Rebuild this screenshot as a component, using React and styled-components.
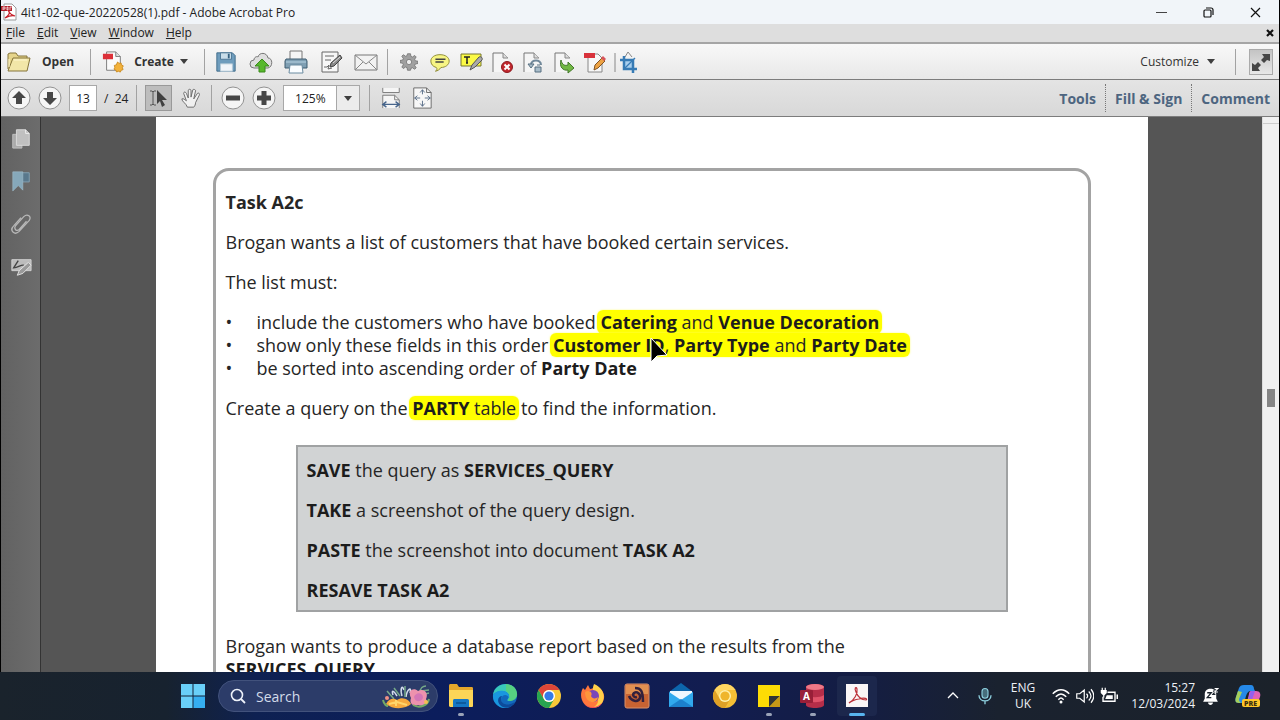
import React from 'react';
import styled, { createGlobalStyle, css } from 'styled-components';


const GlobalStyle = createGlobalStyle`
  * {
    box-sizing: border-box;
  }

  body {
    margin: 0;
    background: #000;
    font-family: "Open Sans", "Noto Sans", sans-serif;
    font-size: 12px;
    color: #222;
  }

  button, input {
    font: inherit;
    color: inherit;
  }

  button {
    border: none;
    background: none;
    padding: 0;
  }

  svg {
    display: block;
    flex: none;
  }
`;


const Desktop = styled.div`
  display: flex;
  flex-direction: column;
  height: 100vh;
  overflow: hidden;
`;


const AppWindow = styled.div`
  display: flex;
  flex-direction: column;
  flex: 1;
  min-height: 0;
  margin: 0 1px;
`;


const TitleBar = styled.header`
  display: flex;
  align-items: center;
  height: 24px;
  flex: none;
  background: #f1f5f9;
`;

const Title = styled.h1`
  flex: 1;
  margin: 0 0 0 4px;
  font-size: 12px;
  font-weight: 400;
`;

const WindowButton = styled.button`
  display: flex;
  align-items: center;
  justify-content: center;
  width: 47px;
  height: 24px;
`;


const MenuBar = styled.nav`
  display: flex;
  align-items: center;
  gap: 12px;
  height: 20px;
  flex: none;
  padding: 0 4px 0 5px;
  background: #dedede;
  border-bottom: 2px solid #a5a5a5;
`;

const MenuItem = styled.button`
  line-height: 18px;
`;

const CloseDocument = styled.button`
  margin-left: auto;
`;


const Toolbar = styled.div`
  display: flex;
  align-items: center;
  height: ${({ $low }) => $low ? '37px' : '36px'};
  flex: none;
  border-bottom: 1px solid #7c7c7c;
  background: ${({ $low }) => $low
    ? 'linear-gradient(#e4e4e4, #d8d8d8)'
    : 'linear-gradient(#f8f8f8, #e8e8e8)'};
`;

const ToolGroup = styled.div`
  display: flex;
  align-items: center;
  gap: ${({ $gap }) => $gap || 0}px;
  padding: 0 ${({ $pad }) => $pad || 0}px;
`;

const Divider = styled.span`
  width: 1px;
  height: 26px;
  background: #a2a2a2;
`;

const DottedDivider = styled.span`
  height: 28px;
  border-left: 1px dotted #777;
`;

const IconButton = styled.button`
  display: flex;
  align-items: center;
  justify-content: center;
  width: 24px;
  height: 26px;
`;

const TextButton = styled.button`
  display: flex;
  align-items: center;
  gap: 6px;
  height: 26px;
  color: #333;
  font-weight: ${({ $bold }) => $bold ? 700 : 400};

  svg:first-child {
    margin-right: 4px;
  }
`;

const CustomizeButton = styled(TextButton)`
  gap: 8px;
  padding: 0 7px;

  svg:first-child {
    margin-right: 0;
  }
`;

const CursorTool = styled(IconButton)`
  width: 27px;
  border: 1px solid #999;
  background: #bdbdbd;
`;

const FullScreenButton = styled(IconButton)`
  border: 1px solid #aaa;
  background: linear-gradient(#c4c4c4, #e8e8e8);
`;

const NumberField = styled.input`
  width: ${({ $wide }) => $wide ? '54px' : '28px'};
  height: 26px;
  padding: 0;
  border: 1px solid #a8a8a8;
  background: #fff;
  text-align: center;
`;

const ZoomDrop = styled.button`
  display: flex;
  align-items: center;
  justify-content: center;
  width: 23px;
  height: 26px;
  border: 1px solid #a8a8a8;
  border-left: none;
  background: #ececec;
`;

const PageTotal = styled.span`
  margin: 0 8px 0 1px;
`;

const PanelLink = styled.button`
  padding: 0 9px;
  color: #4d6580;
  font-size: 14px;
  font-weight: 700;
`;

const Right = styled.div`
  display: flex;
  align-items: center;
  gap: ${({ $gap }) => $gap || 0}px;
  margin-left: auto;
  padding-right: ${({ $gap }) => $gap ? '6px' : 0};
`;


const Workspace = styled.main`
  display: flex;
  flex: 1;
  min-height: 0;
  background: #555;
`;

const SidePanel = styled.aside`
  display: flex;
  flex-direction: column;
  align-items: center;
  gap: 17px;
  width: 40px;
  flex: none;
  padding-top: 8px;
  background: linear-gradient(90deg, #626262, #6c6c6c);
  border-right: 1px solid #333;
`;

const Viewer = styled.section`
  display: flex;
  justify-content: center;
  flex: 1;
  min-width: 0;
  overflow: hidden;
`;

const Paper = styled.article`
  position: relative;
  width: 100%;
  max-width: 992px;
  height: max-content;
  padding: 51px 57px;
  background: #fff;
`;

const TaskCard = styled.div`
  padding: 20px 10px 60px;
  border: 3px solid #a3a3a3;
  border-radius: 16px;
  color: #262626;
  font-family: "Open Sans", "Noto Sans", sans-serif;
  font-size: 18px;
  line-height: 23px;

  strong {
    font-weight: 700;
    color: #1c1c1c;
  }
`;

const TaskTitle = styled.h2`
  margin: 0 0 17px;
  font-size: 18px;
  font-weight: 700;
`;

const Paragraph = styled.p`
  margin: 0 0 17px;
`;

const Requirements = styled.ul`
  list-style: none;
  margin: 0 0 17px;
  padding: 0;
`;

const Requirement = styled.li`
  display: flex;

  &::before {
    content: '•';
    width: 31px;
    flex: none;
  }
`;

const Highlight = styled.mark`
  margin: 0 -3px;
  padding: 0 3px;
  border-radius: 6px;
  color: inherit;
  background: #ff0;
  box-shadow: 0 0 2px #ffff70;
`;

const Instructions = styled.div`
  margin: 25px 70px 23px;
  padding: 12px 9px 8px;
  border: 2px solid #a0a2a3;
  background: #d1d3d4;

  ${Paragraph}:last-child {
    margin-bottom: 0;
  }
`;

const Pointer = styled.svg`
  position: absolute;
  left: 494px;
  top: 220px;
`;

const ScrollTrack = styled.div`
  display: grid;
  grid-template-rows: 7px 266fr 18px 265fr;
  justify-items: center;
  width: 17px;
  flex: none;
  border-left: 1px solid #ddd;
  background: #f0f0f0;
`;

const ScrollCap = styled.span`
  width: 100%;
  border-bottom: 1px solid #ccc;
`;

const ScrollThumb = styled.span`
  grid-row: 3;
  width: 8px;
  background: #858585;
`;


const Taskbar = styled.footer`
  display: flex;
  align-items: center;
  height: 48px;
  flex: none;
  padding: 0 3px 0 176px;
  color: #eef2f7;
  background: linear-gradient(90deg, #1a232c 0%, #17222f 13%, #0e2152 20%, #0b1d5c 34%, #121d50 55%, #141d43 67%, #1a222f 78%, #1b222a 100%);
`;

const StartButton = styled.button`
  display: flex;
  align-items: center;
  justify-content: center;
  width: 34px;
  height: 40px;
`;

const SearchBox = styled.label`
  display: flex;
  align-items: center;
  width: 220px;
  height: 32px;
  margin-left: 8px;
  padding: 0 5px 0 11px;
  border: 1px solid #42527c;
  border-radius: 16px;
  background: #2c3c69;
`;

const SearchInput = styled.input`
  flex: 1;
  min-width: 0;
  padding: 0 0 0 10px;
  border: none;
  outline: none;
  background: none;
  font-size: 14px;

  &::placeholder {
    color: #d3dbea;
    opacity: 1;
  }
`;

const TaskButton = styled.button`
  display: flex;
  flex-direction: column;
  align-items: center;
  justify-content: flex-end;
  gap: 4px;
  width: 40px;
  height: 40px;
  border-radius: 4px;

  ${({ $active }) => $active && css`
    background: #1c274c;
  `}

  &::after {
    content: '';
    width: ${({ $active }) => $active ? '16px' : '6px'};
    height: 3px;
    border-radius: 2px;
    background: ${({ $active, $open }) => $active ? '#58b4ee' : $open ? '#9aa3b8' : 'transparent'};
  }
`;

const TaskButtons = styled.div`
  display: flex;
  gap: 4px;
  margin-left: 3px;
`;

const Tray = styled.div`
  display: flex;
  align-items: center;
  margin-left: auto;
`;

const TrayButton = styled.button`
  display: flex;
  align-items: center;
  justify-content: center;
  gap: 6px;
  height: 40px;
  padding: 0 ${({ $pad }) => $pad}px;
  line-height: 16px;
  white-space: pre-line;
  text-align: ${({ $end }) => $end ? 'right' : 'center'};
`;


const Svg = ({ size = 24, w = size, h = size, box = '0 0 24 24', children }) => (
  <svg width={w} height={h} viewBox={box} fill="none" aria-hidden="true">{children}</svg>
);

const Caret = ({ size = 8 }) => (
  <Svg w={size} h={5} box="0 0 8 5"><path d="M0 0h8L4 5z" fill="#3f3f3f" /></Svg>
);

const PdfIcon = () => (
  <Svg w={16} h={18} box="0 0 16 18">
    <path d="M3 1h8l4 4v12H3z" fill="#fff" stroke="#999" />
    <path d="M0 3h11v5H0z" fill="#b3202a" />
    <path d="M2 4v3M2 4h2v2H2M6 4v3h1V4zM9 7V4h2" stroke="#fff" strokeWidth=".7" />
    <path d="M4 15c3-2 5-5 4-7s-1 3 6 5c-3-1-6 0-10 2z" stroke="#c5202a" strokeWidth="1.2" />
  </Svg>
);

const FolderIcon = () => (
  <Svg w={26} h={22} box="0 0 26 22">
    <path d="M2 18V3l2-1h6l2 3h9v4" fill="#e6d58b" stroke="#85743a" />
    <path d="M7 7h17l-3 13H2z" fill="#f2e6a8" stroke="#85743a" strokeLinejoin="round" />
    <path d="M3 8v8M8 9h13" stroke="#fff8cf" />
  </Svg>
);

const CreateIcon = () => (
  <Svg size={22}>
    <path d="M5 1h10l5 5v15H5z" fill="#fafafa" stroke="#777" />
    <path d="M15 1v5h5" fill="#ddd" stroke="#777" />
    <path d="M1 3h11v6H1z" fill="#dc3038" />
    <path d="m17 12 1.600 1.500 2.200-.5.4 2.200 2 1-1 2 .8 2.100-2.100.7-.9 2-2-.9-2.100.8-.8-2.100-2-1 .9-2-.6-2.100 2.200-.5z" fill="#f3b23b" stroke="#c98a20" />
  </Svg>
);

const SaveIcon = () => (
  <Svg size={22}>
    <path d="M2 2h17l3 3v17H2z" fill="#6f9dbd" stroke="#3e6a89" />
    <path d="M6 2h12v7H6z" fill="#c9dde9" stroke="#4a7594" />
    <path d="M14 3h2v5h-2z" fill="#335f7e" />
    <path d="M6 14h13v8H6z" fill="#f2f6fa" stroke="#b7cbd8" />
  </Svg>
);

const CloudIcon = () => (
  <Svg size={24}>
    <path d="M5 18a4 4 0 0 1 0-8c0-3 3-4 4-3 1-5 9-5 10 1 5 0 5 9 0 10z" fill="#dedede" stroke="#777" />
    <path d="m13 9 7 7h-4v6h-6v-6H6z" fill="#57b82c" stroke="#3b8a1d" />
  </Svg>
);

const PrintIcon = () => (
  <Svg size={24}>
    <path d="M6 1h12v9H6z" fill="#f5f5f5" stroke="#777" />
    <path d="M2 9h20l1 2v7H1v-7z" fill="#7f9fb3" stroke="#3e5c70" />
    <path d="M2 12h20" stroke="#b9d4e4" />
    <path d="M6 15h12l1 8H5z" fill="#fafdff" stroke="#6b8ba0" />
  </Svg>
);

const EditIcon = () => (
  <Svg size={24}>
    <path d="M3 2h16v20H3z" fill="#f7f7f7" stroke="#666" />
    <path d="M6 6h9M6 10h6M5 17h3l2-2-1 4 4-1" stroke="#666" />
    <path d="m11 17 1-4 9-8 2 3-8 8z" fill="#888" stroke="#444" />
    <path d="m14 13 7-6" stroke="#ddd" />
  </Svg>
);

const MailIcon = () => (
  <Svg size={24}>
    <path d="M1 5h22v15H1z" fill="#f2f2f2" stroke="#777" />
    <path d="m1 5 11 9L23 5M1 20l8-8M23 20l-8-8" stroke="#888" />
  </Svg>
);

const GearIcon = () => (
  <Svg size={18}>
    <path d="M10 1h4l.6 3.500 2 .8 3-2 2 2-2 3 .8 2 3.600.7v3l-3.600.7-.8 2 2 3-2 2-3-2-2 .8L14 23h-4l-.6-3.500-2-.8-3 2-2-2 2-3-.8-2L0 13v-3l3.600-.7.8-2-2-3 2-2 3 2 2-.8z" fill="#a0a0a0" stroke="#6c6c6c" />
    <circle cx="12" cy="12" r="3.500" fill="#eee" stroke="#6c6c6c" />
  </Svg>
);

const CommentIcon = () => (
  <Svg size={22}>
    <path d="M12 4c6 0 10 3 10 7s-4 7-9 7c-1 2-4 4-6 4 2-1 2-3 1-4-4-1-6-4-6-7 0-4 4-7 10-7z" fill="#f7f584" stroke="#89852a" />
    <path d="M7 9h11M7 12h9" stroke="#444" strokeWidth="1.500" />
  </Svg>
);

const HighlightIcon = () => (
  <Svg size={24}>
    <path d="M2 4h20v12H2z" fill="#fbfa45" stroke="#777732" />
    <path d="M5 7h6M8 7v6M7 13h2" stroke="#222" strokeWidth="1.500" />
    <path d="m11 20 2-5 7-8c2-1 4 1 3 3l-7 7z" fill="#aaa" stroke="#555" />
  </Svg>
);

const Sheet = () => (
  <>
    <path d="M3 3h11l4 4v15H3z" fill="#f5f5f5" />
    <path d="M3 22V3h10l5 5" stroke="#777" />
    <path d="M13 3v5h5" fill="#ddd" stroke="#888" />
  </>
);

const DeletePageIcon = () => (
  <Svg size={24}>
    <Sheet />
    <circle cx="17" cy="17" r="5.500" fill="#c1272d" stroke="#8d1b20" />
    <path d="m14.500 14.500 5 5m0-5-5 5" stroke="#fff" strokeWidth="2" />
  </Svg>
);

const RotateIcon = () => (
  <Svg size={24}>
    <Sheet />
    <path d="M10 15c0-6 10-6 10 0" stroke="#71889a" strokeWidth="2" />
    <path d="m7 14 3 4 3-4zM14 17h6v5h-6zM16 15h3" fill="#a9bdca" stroke="#566f80" />
  </Svg>
);

const ExtractIcon = () => (
  <Svg size={24}>
    <Sheet />
    <path d="M9 10c1 5 4 6 7 5v-3l6 6-6 5v-3c-5 1-9-3-7-10z" fill="#72b844" stroke="#43782a" />
  </Svg>
);

const PdfEditIcon = () => (
  <Svg size={24}>
    <path d="M5 4h10l4 4v14H5z" fill="#f7f7f7" stroke="#888" />
    <path d="M1 3h11v5H1z" fill="#d8323b" />
    <path d="m11 20 1-5 7-7 3 3-7 7z" fill="#eda344" stroke="#805323" />
    <path d="m18 8 3 3 2-2-3-3z" fill="#d8545a" />
  </Svg>
);

const CropIcon = () => (
  <Svg size={24}>
    <path d="M1 3v19M11 7l3-5 4 5" stroke="#888" />
    <path d="M10 11h8v8h-8z" fill="#a9cfee" />
    <path d="M10 6v13h13M6 10h13v13" stroke="#377bb5" strokeWidth="2.500" />
    <path d="m10 19 11-11" stroke="#377bb5" strokeWidth="1.300" />
  </Svg>
);

const RoundIcon = ({ d }) => (
  <Svg size={24}>
    <circle cx="12" cy="12" r="11" fill="#f5f5f5" stroke="#929292" />
    <path d={d} fill="#474747" />
  </Svg>
);

const SelectIcon = () => (
  <Svg w={20} h={20} box="0 0 20 20">
    <path d="M1 3h2l1 1 1-1h2M4 4v12M1 17h2l1-1 1 1h2" stroke="#555" />
    <path d="m8 2 10 10h-5l3 5-3 2-2-6-3 3z" fill="#404040" />
  </Svg>
);

const HandIcon = () => (
  <Svg size={22}>
    <path d="M8 22c-1-4-6-6-6-9 2-1 3 1 5 2L4 7c0-2 2-2 3 0l2 5V4c0-2 3-2 3 0v7l2-8c1-1 3 0 3 1l-2 9 4-6c1-1 3 0 2 2l-4 8c0 2-1 4-2 5z" fill="#f0f0f0" stroke="#666" />
  </Svg>
);

const FitWidthIcon = () => (
  <Svg size={22}>
    <path d="M3 1v5h18V1M3 23V9h13l5 5v9" fill="#f5f5f5" stroke="#777" />
    <path d="M16 9v5h5" stroke="#777" />
    <path d="M4 19h16M7 16l-4 3 4 3M17 16l4 3-4 3" stroke="#47658b" strokeWidth="1.500" />
  </Svg>
);

const FitPageIcon = () => (
  <Svg size={22}>
    <path d="M3 1h14l5 5v17H3z" fill="#f7f7f7" stroke="#666" />
    <path d="M17 1v5h5" stroke="#666" />
    <path d="M12.500 3v5M12.500 15v6M4 12h6M15 12h6M10 6l2.500-3L15 6M10 18l2.500 3 2.500-3M7 9.500 4 12l3 2.500M18 9.500l3 2.500-3 2.500" stroke="#536984" />
  </Svg>
);

const ExpandIcon = () => (
  <Svg w={20} h={20} box="0 0 20 20">
    <path d="M11 2h8v7l-3-1-3 3-3-3 3-3zM7 10l3 3-3 3 2 3H1v-8l3 2z" fill="#454545" />
  </Svg>
);

const sideIcons = [
  {
    label: 'Page thumbnails',
    art: (
      <>
        <path d="M3 8h10v15H3z" fill="#aaa" stroke="#c4c4c4" />
        <path d="M7 3h10l4 4v13H7z" fill="#c0c0c0" stroke="#ddd" />
        <path d="M17 3v4h4" stroke="#f0f0f0" />
      </>
    ),
  },
  {
    label: 'Bookmarks',
    art: (
      <>
        <path d="M11 3h10v10H11z" fill="#59788c" stroke="#83a2b3" />
        <path d="M3 2h11v20l-5-5-6 6z" fill="#86a8ba" stroke="#a2c1cf" strokeWidth=".6" />
      </>
    ),
  },
  {
    label: 'Attachments',
    art: (
      <path d="m18 9-8 9c-3 3-6-1-4-4l9-10c4-4 9 0 6 4L10 20c-5 5-11-1-6-6l8-9" stroke="#b8b8b8" strokeWidth="1.400" />
    ),
  },
  {
    label: 'Signatures',
    art: (
      <>
        <path d="M2 4h21v12H2z" fill="#bcbcbc" stroke="#d3d3d3" />
        <path d="m9 5-5 8c5 0 8-4 11-3" stroke="#444" strokeWidth="1.500" />
        <path d="m8 21 2-5 10-9 3 3-9 9z" fill="#9a9a9a" stroke="#e5e5e5" />
      </>
    ),
  },
];

const fileTools = [
  ['Save', SaveIcon],
  ['Upload', CloudIcon],
  ['Print', PrintIcon],
  ['Sign', EditIcon],
  ['Email', MailIcon],
];

const editTools = [
  ['Preferences', GearIcon],
  ['Add comment', CommentIcon],
  ['Highlight text', HighlightIcon],
  ['Delete pages', DeletePageIcon],
  ['Rotate pages', RotateIcon],
  ['Extract pages', ExtractIcon],
  ['Edit PDF', PdfEditIcon],
  ['Crop pages', CropIcon],
];

const apps = [
  {
    name: 'File Explorer',
    open: true,
    art: (
      <>
        <path d="M1 3c0-2 1-2 2-2h6l2 3h13c1 0 1 1 1 2v17H1z" fill="#e5a72b" />
        <path d="M1 7h24v16c0 1-1 1-2 1H3c-1 0-2 0-2-2z" fill="#fcd557" />
        <path d="M5 18c0-2 1-2 2-2h12c2 0 2 1 2 2v6H5z" fill="#1576c4" />
        <path d="M8 20h10" stroke="#0d5a9d" strokeWidth="2" />
      </>
    ),
  },
  {
    name: 'Edge',
    art: (
      <>
        <circle cx="13" cy="13" r="12" fill="#1269bd" />
        <path d="M1 12C3-3 25-2 25 11c0 5-4 7-8 7-2 0-2-1-1-2 5-7-9-12-15-4z" fill="#39c9ba" />
        <path d="M14 1c8 0 12 7 11 12-2 5-7 6-9 4 3-3 1-7-2-9z" fill="#6ad55c" opacity=".6" />
        <path d="M1 12c6-8 18-3 16 3-2-5-8-3-8 2 0 4 4 8 9 7C8 28 0 20 1 12z" fill="#1997df" />
        <path d="M10 13c-4 6 4 12 13 6-4 7-11 7-15 3-4-5-1-9 2-9z" fill="#0d4b9c" />
      </>
    ),
  },
  {
    name: 'Chrome',
    art: (
      <>
        <circle cx="13" cy="13" r="12" fill="#f8c938" />
        <path d="M2.600 7A12 12 0 0 1 23.400 7H13a6 6 0 0 0-5.200 9z" fill="#de4638" />
        <path d="M2.600 7a12 12 0 0 0 10.400 18l5.200-9a6 6 0 0 1-10.400 0z" fill="#27a550" />
        <circle cx="13" cy="13" r="6" fill="#fff" />
        <circle cx="13" cy="13" r="4.600" fill="#347be8" />
      </>
    ),
  },
  {
    name: 'Firefox',
    art: (
      <>
        <path d="M3 5l2 2 3-5 2 4c2 0 4-1 4-4 6 2 11 7 10 13-1 6-5 10-11 10C3 25-2 13 3 5z" fill="#ff783c" />
        <path d="M14 1c6 2 12 9 9 17-2 5-6 6-9 6 7-4 4-13 0-14-2-3-1-6 0-9z" fill="#ffd049" />
        <path d="M2 16c3 9 13 11 20 4-3 6-16 8-20-4z" fill="#ec376c" />
        <circle cx="13" cy="13" r="6" fill="#7947ba" />
        <path d="M5 9c5-3 8 1 6 4 1 3 5 3 7 1-1 8-13 7-13-5z" fill="#ff963b" />
      </>
    ),
  },
  {
    name: 'Keyboard',
    art: (
      <>
        <rect x="1" y="1" width="24" height="24" rx="2" fill="#c86332" stroke="#d9926a" />
        <path d="M2 2h22v9H2z" fill="#f1af66" opacity=".6" />
        <path d="M5 13c2 5 9 7 11 2 1-4-3-7-6-5-2 2 0 5 3 4M11 5c6 0 8 3 8 14" stroke="#32203c" strokeWidth="2.500" />
      </>
    ),
  },
  {
    name: 'Mail',
    art: (
      <>
        <path d="M1 9 13 0l12 9v14H1z" fill="#0d66ac" />
        <path d="M2 8h22v12H2z" fill="#eff8ff" />
        <path d="m1 9 12 8 12-8v15H1z" fill="#31a9ed" />
        <path d="m1 24 12-8 12 8z" fill="#1c80cc" />
      </>
    ),
  },
  {
    name: 'Chrome Canary',
    art: (
      <>
        <circle cx="13" cy="13" r="12" fill="#f5bf35" />
        <path d="M2.600 7A12 12 0 0 1 23.400 7H13a6 6 0 0 0-5.200 9z" fill="#ffd661" />
        <path d="M2.600 7a12 12 0 0 0 10.400 18l5.200-9a6 6 0 0 1-10.400 0z" fill="#dfa126" />
        <circle cx="13" cy="13" r="6" fill="#fff0ab" />
        <circle cx="13" cy="13" r="4.600" fill="#efb52b" />
      </>
    ),
  },
  {
    name: 'Sticky Notes',
    open: true,
    art: (
      <>
        <path d="M2 2h22v12L13 24H2z" fill="#fddc05" />
        <path d="M13 13h11L13 24z" fill="#343634" />
        <path d="M24 13v11H13z" fill="#c69817" />
      </>
    ),
  },
  {
    name: 'Access',
    open: true,
    art: (
      <>
        <path d="M6 4c0-4 18-4 18 0v18c0 4-18 4-18 0z" fill="#b62e49" />
        <ellipse cx="15" cy="4" rx="9" ry="3" fill="#ed7886" />
        <path d="M6 12c4 3 14 3 18 0v5c-4 3-14 3-18 0z" fill="#df5269" />
        <rect x="0" y="7" width="13" height="13" rx="1" fill="#981f38" />
        <text x="3" y="17" fill="#fff" fontSize="10" fontWeight="700">A</text>
      </>
    ),
  },
  {
    name: 'Acrobat',
    open: true,
    active: true,
    art: (
      <>
        <path d="M2 1h22v23H2z" fill="#faf6f6" />
        <path d="M5 20c5-3 9-9 8-14-1-3-3-1-1 3 2 5 5 8 10 8 2-1-1-3-7-1-4 0-9 3-10 4z" stroke="#bc3038" strokeWidth="1.200" />
      </>
    ),
  },
];

const SearchArt = () => (
  <Svg w={50} h={28} box="0 0 50 28">
    <path d="M15 14C12 9 9 7 11 13M20 14C18 7 20 2 22 8M24 15c1-8 6-11 4-4" stroke="#d4ddec" strokeWidth="1.500" />
    <path d="m18 14-6-8M23 15V4M12 17 5 9M38 11c0-5 3-7 6-7M39 9l8-1M43 12l4-1" stroke="#76a988" strokeWidth="1.500" />
    <path d="M29 16C25 8 32 5 36 9c6-3 11 2 8 8 3 6-4 8-8 6-5 2-9-2-7-7z" fill="#ed92ad" />
    <path d="M32 15c2-5 8-5 9 0 0 5-8 6-9 0z" fill="#d477b6" />
    <path d="M4 22c3-6 8-6 11-4 6-4 12 0 14 4-5 5-18 6-25 0z" fill="#f7aa3d" />
    <path d="m7 22 8-2 10 3M14 18v6" stroke="#ffd56a" strokeWidth="2" />
    <path d="M1 18c1 5 4 6 5 6M31 23c7 4 15 0 16-6" stroke="#74aa65" strokeWidth="2" />
    <circle cx="5" cy="16" r="2" fill="#f09186" />
    <circle cx="44" cy="20" r="2" fill="#f6bd53" />
  </Svg>
);

const MicIcon = () => (
  <Svg size={18}>
    <rect x="8" y="2" width="8" height="13" rx="4" fill="#476e7c" stroke="#8ed0df" strokeWidth="1.500" />
    <path d="M4 11c0 10 16 10 16 0M12 19v4" stroke="#8ed0df" strokeWidth="1.800" />
  </Svg>
);

const WifiIcon = () => (
  <Svg size={18}>
    <path d="M1 9c7-7 15-7 22 0M5 13c5-5 9-5 14 0M8.500 17c3-3 4-3 7 0" stroke="#fff" strokeWidth="2" />
    <circle cx="12" cy="20" r="2" fill="#fff" />
  </Svg>
);

const VolumeIcon = () => (
  <Svg size={18}>
    <path d="M1 9h4l6-5v16l-6-5H1zM14 9c2 2 2 4 0 6M17 6c4 4 4 8 0 12M20 3c5 6 5 12 0 18" stroke="#fff" strokeWidth="1.600" />
  </Svg>
);

const BatteryIcon = () => (
  <Svg size={18}>
    <path d="M10 7h10v12H4v-6" stroke="#fff" strokeWidth="1.800" />
    <path d="M9 11h8v5H7zM22 10h2v6h-2z" fill="#fff" />
    <path d="M3 1v4M7 1v4M5 9v5" stroke="#fff" strokeWidth="1.600" />
    <path d="M1 4h8v4L6 11H4L1 8z" fill="#fff" />
  </Svg>
);

const BellIcon = () => (
  <Svg w={17} h={18} box="0 0 20 22">
    <path d="M10 2C5 2 3 5 3 9v5l-2 4h18l-2-4V9c0-4-2-7-7-7zM7 19c0 4 6 4 6 0z" fill="#fff" />
    <path d="M6 7h5l-5 6h5M13 5h3l-3 4h3" stroke="#1a232c" strokeWidth="1.600" />
    <path d="M15 2h4l-4 4h4" stroke="#fff" strokeWidth="1.300" />
  </Svg>
);

const CopilotIcon = () => (
  <Svg w={26} h={26} box="0 0 26 26">
    <path d="M9 2h7c2 0 3 2 3 4l1 2h-4c-3 0-4 2-5 5l-2 7H4c-4 0-4-3-3-6L4 5c1-2 2-3 5-3z" fill="#2589e8" />
    <path d="M7 9 4 16c0 2 1 4 3 4H4c-4 0-4-3-3-6l2-6z" fill="#a5cf5a" />
    <path d="M16 8h5c4 0 5 3 4 6l-2 5H12l2-8c0-2 1-3 2-3z" fill="#e062b4" />
    <path d="M16 8h4l-3 9h-4l2-7z" fill="#9660ed" />
    <rect x="7" y="16" width="18" height="8" rx="2" fill="#ffc729" />
    <text x="9" y="23" fill="#3d3010" fontSize="7" fontWeight="800">PRE</text>
  </Svg>
);


const App = () => (
  <Desktop>
    <GlobalStyle />
    <AppWindow>
      <TitleBar>
        <PdfIcon />
        <Title>4it1-02-que-20220528(1).pdf - Adobe Acrobat Pro</Title>
        <WindowButton aria-label="Minimize">
          <Svg w={11} h={11} box="0 0 11 11"><path d="M0 5.500h11" stroke="#444" /></Svg>
        </WindowButton>
        <WindowButton aria-label="Restore">
          <Svg w={11} h={11} box="0 0 11 11">
            <rect x="1" y="3" width="7" height="7" rx="1" stroke="#111" strokeWidth="1.200" />
            <path d="M3 1h5c1 0 2 1 2 2v5" stroke="#111" strokeWidth="1.200" />
          </Svg>
        </WindowButton>
        <WindowButton aria-label="Close">
          <Svg w={11} h={11} box="0 0 11 11"><path d="m1 1 9 9M10 1l-9 9" stroke="#111" strokeWidth="1.200" /></Svg>
        </WindowButton>
      </TitleBar>

      <MenuBar>
        {['File', 'Edit', 'View', 'Window', 'Help'].map(item => (
          <MenuItem key={item}><u>{item[0]}</u>{item.slice(1)}</MenuItem>
        ))}
        <CloseDocument aria-label="Close document">
          <Svg w={9} h={9} box="0 0 9 9"><path d="m1 1 6 6M7 1 1 7" stroke="#111" strokeWidth="2.200" /></Svg>
        </CloseDocument>
      </MenuBar>

      <Toolbar>
        <ToolGroup $pad={5}>
          <TextButton $bold><FolderIcon />Open</TextButton>
        </ToolGroup>
        <ToolGroup $pad={11}><Divider /></ToolGroup>
        <TextButton $bold><CreateIcon />Create<Caret /></TextButton>
        <ToolGroup $pad={8}><span /></ToolGroup>
        <Divider />
        <ToolGroup $gap={11} $pad={9}>
          {fileTools.map(([label, Icon]) => <IconButton key={label} aria-label={label}><Icon /></IconButton>)}
        </ToolGroup>
        <Divider />
        <ToolGroup $gap={7} $pad={9}>
          {editTools.map(([label, Icon]) => <IconButton key={label} aria-label={label}><Icon /></IconButton>)}
        </ToolGroup>
        <Right $gap={13}>
          <CustomizeButton><span>Customize</span><Caret /></CustomizeButton>
          <Divider />
          <FullScreenButton aria-label="Read mode"><ExpandIcon /></FullScreenButton>
        </Right>
      </Toolbar>

      <Toolbar $low>
        <ToolGroup $gap={7} $pad={6}>
          <IconButton aria-label="Previous page"><RoundIcon d="m12 5 7 7h-4v6H9v-6H5z" /></IconButton>
          <IconButton aria-label="Next page"><RoundIcon d="m12 19-7-7h4V6h6v6h4z" /></IconButton>
          <NumberField aria-label="Page number" defaultValue="13" />
        </ToolGroup>
        <PageTotal>/&nbsp; 24</PageTotal>
        <Divider />
        <ToolGroup $gap={7} $pad={8}>
          <CursorTool aria-label="Select"><SelectIcon /></CursorTool>
          <IconButton aria-label="Hand"><HandIcon /></IconButton>
        </ToolGroup>
        <Divider />
        <ToolGroup $gap={7} $pad={9}>
          <IconButton aria-label="Zoom out"><RoundIcon d="M5 9.500h14v5H5z" /></IconButton>
          <IconButton aria-label="Zoom in"><RoundIcon d="M9.500 5h5v4.500H19v5h-4.500V19h-5v-4.500H5v-5h4.500z" /></IconButton>
          <ToolGroup>
            <NumberField $wide aria-label="Zoom level" defaultValue="125%" />
            <ZoomDrop aria-label="Zoom presets"><Caret /></ZoomDrop>
          </ToolGroup>
        </ToolGroup>
        <Divider />
        <ToolGroup $gap={7} $pad={9}>
          <IconButton aria-label="Fit width"><FitWidthIcon /></IconButton>
          <IconButton aria-label="Fit page"><FitPageIcon /></IconButton>
        </ToolGroup>
        <Right>
          <PanelLink>Tools</PanelLink>
          <DottedDivider />
          <PanelLink>Fill &amp; Sign</PanelLink>
          <DottedDivider />
          <PanelLink>Comment</PanelLink>
        </Right>
      </Toolbar>

      <Workspace>
        <SidePanel>
          {sideIcons.map(({ label, art }) => (
            <IconButton key={label} aria-label={label}><Svg size={22}>{art}</Svg></IconButton>
          ))}
        </SidePanel>
        <Viewer>
          <Paper>
            <TaskCard>
              <TaskTitle>Task A2c</TaskTitle>
              <Paragraph>Brogan wants a list of customers that have booked certain services.</Paragraph>
              <Paragraph>The list must:</Paragraph>
              <Requirements>
                <Requirement>
                  <span>
                    include the customers who have booked{' '}
                    <Highlight><strong>Catering</strong> and <strong>Venue Decoration</strong></Highlight>
                  </span>
                </Requirement>
                <Requirement>
                  <span>
                    show only these fields in this order{' '}
                    <Highlight>
                      <strong>Customer ID</strong>, <strong>Party Type</strong> and <strong>Party Date</strong>
                    </Highlight>
                  </span>
                </Requirement>
                <Requirement>
                  <span>be sorted into ascending order of <strong>Party Date</strong></span>
                </Requirement>
              </Requirements>
              <Paragraph>
                Create a query on the <Highlight><strong>PARTY</strong> table</Highlight> to find the information.
              </Paragraph>
              <Instructions>
                <Paragraph><strong>SAVE</strong> the query as <strong>SERVICES_QUERY</strong></Paragraph>
                <Paragraph><strong>TAKE</strong> a screenshot of the query design.</Paragraph>
                <Paragraph><strong>PASTE</strong> the screenshot into document <strong>TASK A2</strong></Paragraph>
                <Paragraph><strong>RESAVE TASK A2</strong></Paragraph>
              </Instructions>
              <Paragraph>
                Brogan wants to produce a database report based on the results from the<br />
                <strong>SERVICES_QUERY</strong>.
              </Paragraph>
            </TaskCard>
            <Pointer width="18" height="28" viewBox="0 0 18 28" aria-hidden="true">
              <path d="M1 1v24l6-6 10-1z" fill="#000" stroke="#fff" />
            </Pointer>
          </Paper>
        </Viewer>
        <ScrollTrack>
          <ScrollCap />
          <ScrollThumb />
        </ScrollTrack>
      </Workspace>
    </AppWindow>

    <Taskbar>
      <StartButton aria-label="Start">
        <Svg size={24}>
          <path d="M0 0h11.500v11.500H0zM12.500 0H24v11.500H12.500zM0 12.500h11.500V24H0z" fill="#69cff8" />
          <path d="M12.500 12.500H24V24H12.500z" fill="#35aef0" />
        </Svg>
      </StartButton>
      <SearchBox>
        <Svg w={16} h={16} box="0 0 16 16">
          <circle cx="7" cy="7" r="5.500" stroke="#eef2fa" strokeWidth="1.600" />
          <path d="m11 11 4 4" stroke="#eef2fa" strokeWidth="1.800" />
        </Svg>
        <SearchInput type="search" placeholder="Search" aria-label="Search" />
        <SearchArt />
      </SearchBox>
      <TaskButtons>
        {apps.map(({ name, art, open, active }) => (
          <TaskButton key={name} aria-label={name} $open={open} $active={active}>
            <Svg size={26} box="0 0 26 26">{art}</Svg>
          </TaskButton>
        ))}
      </TaskButtons>
      <Tray>
        <TrayButton $pad={11} aria-label="Hidden icons">
          <Svg w={12} h={12} box="0 0 12 12"><path d="m1 8 5-5 5 5" stroke="#fff" strokeWidth="1.300" /></Svg>
        </TrayButton>
        <TrayButton $pad={6} aria-label="Microphone"><MicIcon /></TrayButton>
        <TrayButton $pad={11}>{'ENG\nUK'}</TrayButton>
        <TrayButton $pad={6} aria-label="Network, volume and battery">
          <WifiIcon />
          <VolumeIcon />
          <BatteryIcon />
        </TrayButton>
        <TrayButton $pad={7} $end>{'15:27\n12/03/2024'}</TrayButton>
        <TrayButton $pad={0} aria-label="Notifications"><BellIcon /></TrayButton>
        <TrayButton $pad={16} aria-label="Copilot"><CopilotIcon /></TrayButton>
      </Tray>
    </Taskbar>
  </Desktop>
);


export default App;
